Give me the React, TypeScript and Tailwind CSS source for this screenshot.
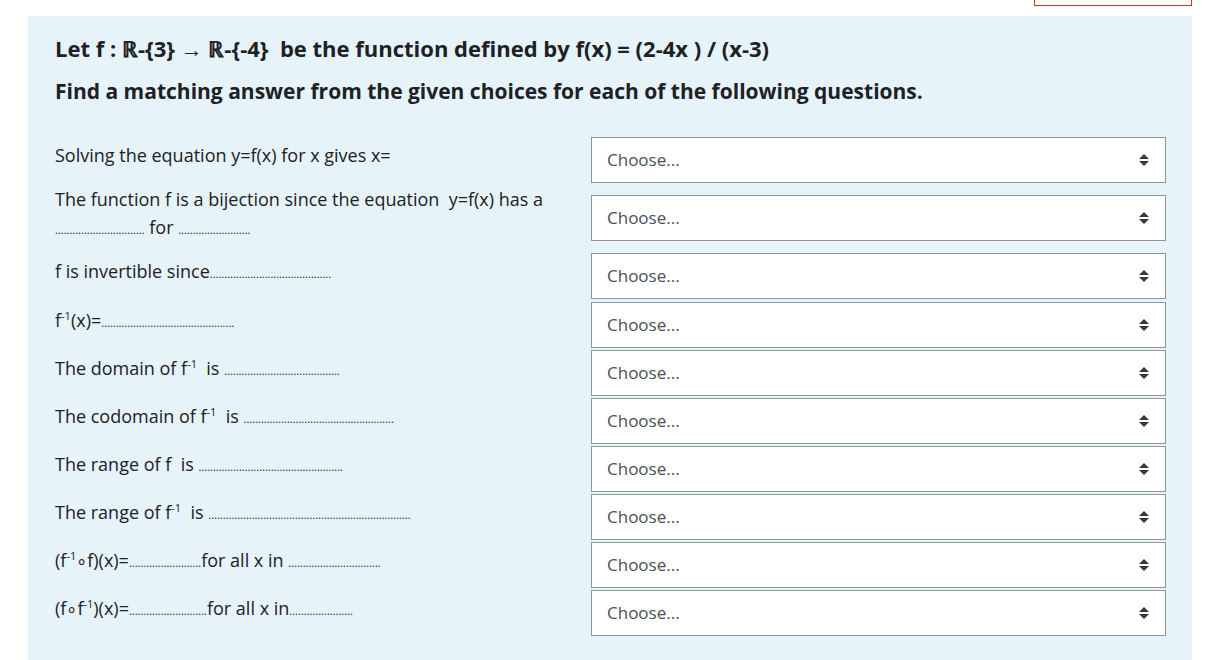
import React from 'react'

const dots = (n: number) => <span className="text-[11px]">{'.'.repeat(n)}</span>

const Inv = () => (
  <>
    f<sup className="text-[11px] relative top-[-7px]">-1</sup>
  </>
)

function UpDown() {
  return (
    <svg width="10" height="12" viewBox="0 0 10 12" className="text-[#343a40]">
      <path d="M5 0 L10 5 L0 5 Z" fill="currentColor" />
      <path d="M0 7 L10 7 L5 12 Z" fill="currentColor" />
    </svg>
  )
}

function Select({ className = '' }: { className?: string }) {
  return (
    <div
      className={`w-[575px] h-[46px] shrink-0 bg-white border border-[#8f959e] flex items-center justify-between pl-[15px] pr-[16px] text-[#495057] text-[17px] ${className}`}
    >
      <span>Choose...</span>
      <UpDown />
    </div>
  )
}

type Row = { label: React.ReactNode; h: string; two?: boolean }

const rows: Row[] = [
  { label: <>Solving the equation y=f(x) for x gives x=</>, h: 'h-[48px]' },
  {
    label: (
      <>
        The function f is a bijection since the equation&nbsp; y=f(x) has a
        <br />
        {dots(31)} for {dots(25)}
      </>
    ),
    h: 'h-[68px]',
    two: true,
  },
  { label: <>f is invertible since{dots(42)}</>, h: 'h-[49px]' },
  { label: <><Inv />(x)={dots(46)}</>, h: 'h-[48px]' },
  { label: <>The domain of <Inv />&nbsp; is {dots(40)}</>, h: 'h-[48px]' },
  { label: <>The codomain of <Inv />&nbsp; is {dots(52)}</>, h: 'h-[48px]' },
  { label: <>The range of f&nbsp; is {dots(50)}</>, h: 'h-[48px]' },
  { label: <>The range of <Inv />&nbsp; is {dots(70)}</>, h: 'h-[48px]' },
  { label: <>(<Inv />∘f)(x)={dots(25)}for all x in {dots(32)}</>, h: 'h-[48px]' },
  { label: <>(f∘<Inv />)(x)={dots(27)}for all x in{dots(22)}</>, h: 'h-[48px]' },
]

export default function App() {
  return (
    <div className="w-[1211px] h-[660px] overflow-hidden bg-white font-['Open_Sans',sans-serif] text-[#1d2125]">
      <div className="flex justify-end pr-[19px]">
        <div className="w-[158px] h-[6px] border border-t-0 border-[#c0392b]" />
      </div>
      <div className="ml-[28px] mt-[10px] w-[1164px] bg-[#e6f3f9] pl-[27px] pr-[26px] pt-[18px] pb-[40px]">
        <p className="text-[22px] leading-[28px] font-bold">
          Let f : ℝ-{'{'}3{'}'} → ℝ-{'{'}-4{'}'}&nbsp; be the function defined by f(x) = (2-4x ) / (x-3)
        </p>
        <p className="text-[21px] leading-[28px] font-bold mt-[15px]">
          Find a matching answer from the given choices for each of the following questions.
        </p>
        <div className="mt-[32px] flex flex-col">
          {rows.map((r, i) => (
            <div key={i} className={`flex items-start ${r.h}`}>
              <div className={`w-[536px] text-[18px] leading-[28px] ${r.two ? 'pt-0' : 'pt-[4px]'}`}>{r.label}</div>
              <Select className={r.two ? 'mt-[10px]' : ''} />
            </div>
          ))}
        </div>
      </div>
    </div>
  )
}
